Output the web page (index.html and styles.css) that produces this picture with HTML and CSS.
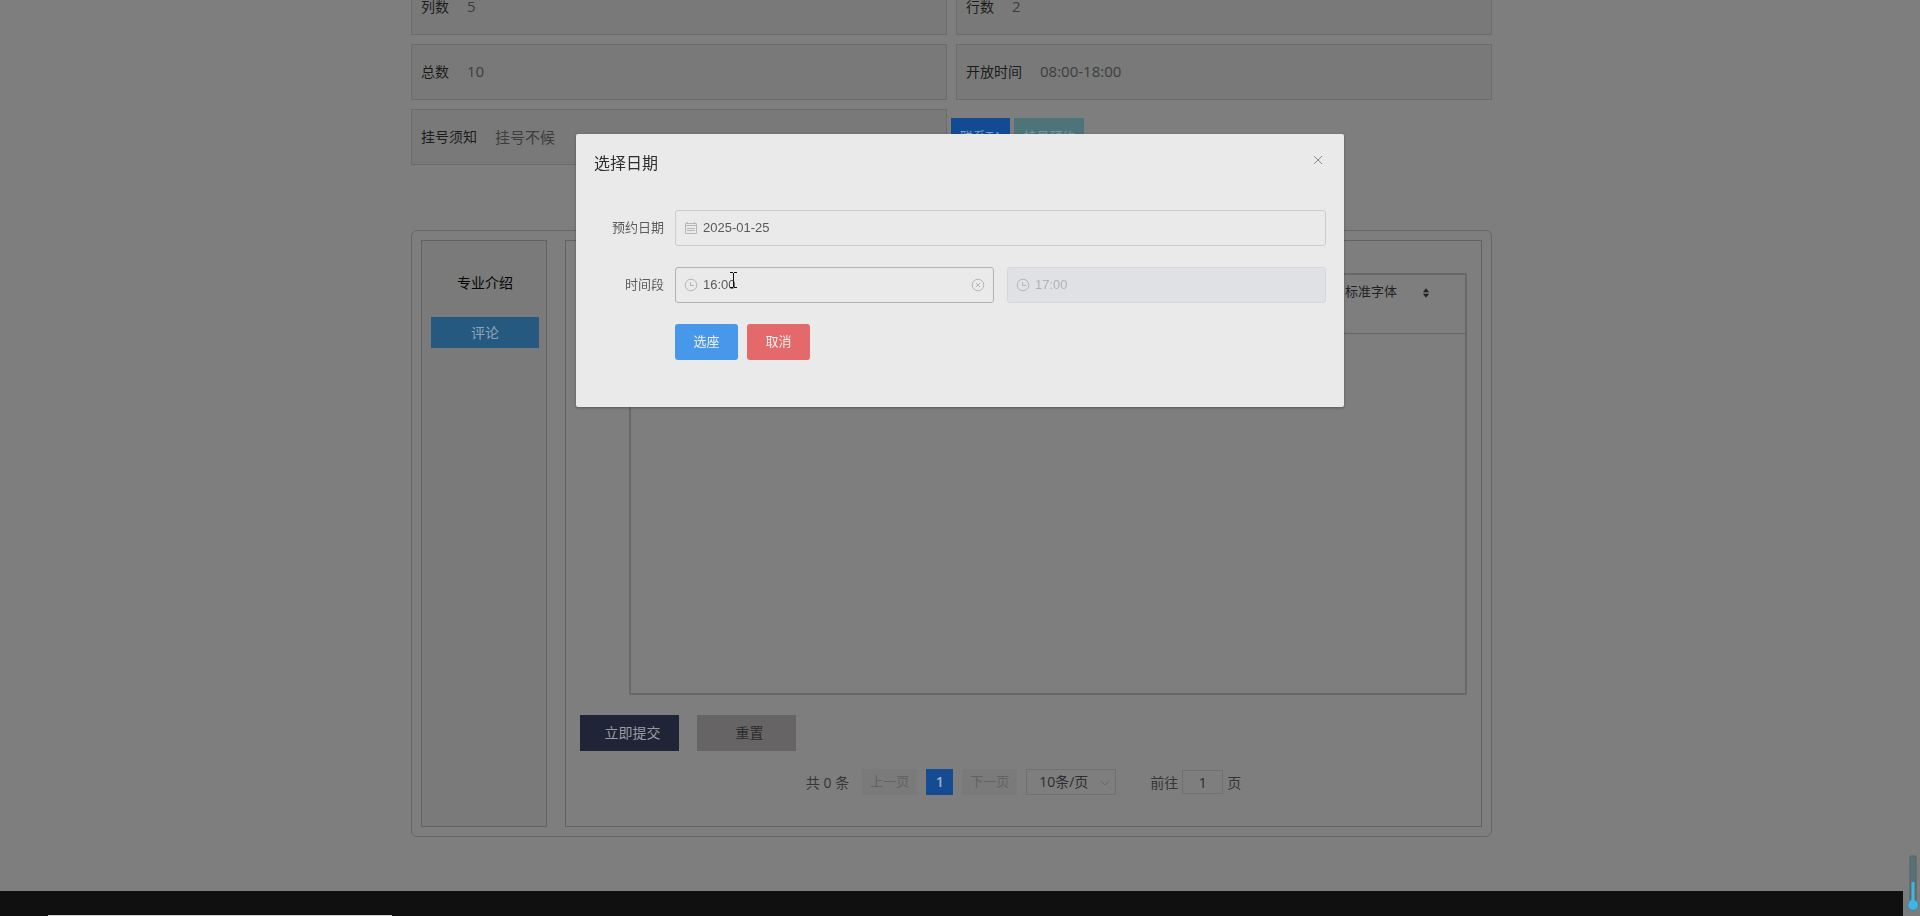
FILE: index.html
```html
<!DOCTYPE html>
<html lang="zh-CN">
<head>
    <meta charset="UTF-8">
    <meta name="viewport" content="width=device-width, initial-scale=1.0">
    <title>预约挂号</title>
    <link rel="stylesheet" href="styles.css">
</head>
<body>
    <div class="page">
        <main class="container">
            <div class="info">
                <div class="info-item"><span class="name">列数</span><span class="value">5</span></div>
                <div class="info-item"><span class="name">行数</span><span class="value">2</span></div>
                <div class="info-item"><span class="name">总数</span><span class="value">10</span></div>
                <div class="info-item"><span class="name">开放时间</span><span class="value">08:00-18:00</span></div>
                <div class="info-item"><span class="name">挂号须知</span><span class="value">挂号不候</span></div>
                <div class="info-actions">
                    <button class="btn-contact">联系TA</button>
                    <button class="btn-book">挂号预约</button>
                </div>
            </div>

            <div class="tabs">
                <nav class="tab-nav">
                    <a href="#intro">专业介绍</a>
                    <a href="#comment" class="active">评论</a>
                </nav>
                <section class="tab-content">
                    <div class="editor">
                        <div class="toolbar">
                            <button class="font-picker">
                                标准字体
                                <svg width="18" height="18" viewBox="0 0 18 18"><polygon points="5 8 9 3 13 8"/><polygon points="5 10 9 15 13 10"/></svg>
                            </button>
                        </div>
                        <div class="editor-body" contenteditable="true" aria-label="评论"></div>
                    </div>
                    <div class="form-actions">
                        <button class="btn-submit">立即提交</button>
                        <button class="btn-reset">重置</button>
                    </div>
                    <div class="pagination">
                        <span class="total">共 0 条</span>
                        <button class="page-btn" disabled>上一页</button>
                        <button class="page-num">1</button>
                        <button class="page-btn" disabled>下一页</button>
                        <div class="page-size">
                            <select aria-label="每页条数">
                                <option>10条/页</option>
                            </select>
                            <svg width="10" height="6" viewBox="0 0 10 6"><path d="M1 1l4 4 4-4"/></svg>
                        </div>
                        <label class="jump">前往<input type="text" value="1">页</label>
                    </div>
                </section>
            </div>
        </main>
        <footer class="footer"></footer>
    </div>

    <div class="overlay">
        <div class="dialog" role="dialog" aria-labelledby="dialogTitle">
            <div class="dialog-header">
                <h2 id="dialogTitle">选择日期</h2>
                <button class="close" aria-label="关闭">
                    <svg width="10" height="10" viewBox="0 0 10 10"><path d="M1 1l8 8M9 1l-8 8"/></svg>
                </button>
            </div>
            <form class="dialog-form">
                <div class="form-row">
                    <label for="date">预约日期</label>
                    <div class="field">
                        <svg class="icon" width="14" height="14" viewBox="0 0 14 14"><path d="M1.500 2.500h11v10h-11zM1.500 4.500h11M3.500 1v2M10.500 1v2M3 7.500h8M3 9.500h8"/></svg>
                        <input type="text" id="date" value="2025-01-25">
                    </div>
                </div>
                <div class="form-row">
                    <label for="start">时间段</label>
                    <div class="field hover">
                        <svg class="icon" width="14" height="14" viewBox="0 0 14 14"><circle cx="7" cy="7" r="5.800"/><path d="M6.500 4v3.500h3.500"/></svg>
                        <input type="text" id="start" value="16:00">
                        <svg class="icon" width="14" height="14" viewBox="0 0 14 14"><circle cx="7" cy="7" r="5.800"/><path d="M5 5l4 4M9 5l-4 4"/></svg>
                        <svg class="cursor" width="9" height="17" viewBox="0 0 9 17"><path d="M1 1.500h3M5 1.500h3M4.500 2v14M1 16.500h3M5 16.500h3"/></svg>
                    </div>
                    <div class="field disabled">
                        <svg class="icon" width="14" height="14" viewBox="0 0 14 14"><circle cx="7" cy="7" r="5.800"/><path d="M6.500 4v3.500h3.500"/></svg>
                        <input type="text" aria-label="结束时间" value="17:00" disabled>
                    </div>
                </div>
                <div class="dialog-actions">
                    <button type="button" class="btn-primary">选座</button>
                    <button type="button" class="btn-danger">取消</button>
                </div>
            </form>
        </div>
    </div>

    <div class="taskline"></div>
    <svg class="thermometer" width="14" height="58" viewBox="0 0 14 58">
        <rect x="4" y="1" width="6" height="46" rx="1" fill="#5a7276" stroke="#4c6266"/>
        <circle cx="7" cy="50" r="5.500" fill="#43b3e0" stroke="#3f7e96"/>
        <path d="M7 27v20" stroke="#43b3e0" stroke-width="3"/>
    </svg>
</body>
</html>
```

FILE: styles.css
```css
* {
    box-sizing: border-box;
}
body {
    margin: 0;
    background-color: #7e7e7e;
    color: #333;
    font-family: "Open Sans", "Noto Sans CJK SC", sans-serif;
    font-size: 14px;
    overflow: hidden;
}
button, input, select {
    font-family: inherit;
    font-size: 14px;
    margin: 0;
    padding: 0;
    border: 0;
    border-radius: 0;
    outline: none;
}
button {
    padding-bottom: 3px;
    cursor: pointer;
}
a {
    text-decoration: none;
}
svg {
    fill: none;
    flex: none;
}

/* page under the mask */
.page {
    height: 100vh;
    padding-right: 17px;
    overflow: hidden;
}
.container {
    width: 90%;
    max-width: 1081px;
    margin: -21px auto 0;
}
.info {
    display: grid;
    grid-template-columns: 1fr 1fr;
    gap: 9px;
}
.info-item {
    height: 56px;
    padding: 0 9px 2px;
    display: flex;
    align-items: center;
    gap: 18px;
    background-color: #797979;
    border: 1px solid #6b6b6b;
}
.info-item .name {
    color: #1c1c1c;
}
.info-item .value {
    font-size: 15px;
    color: #3d3d3d;
}
.info-actions {
    display: flex;
    gap: 4px;
    margin-left: -5px;
    padding-top: 9px;
}
.info-actions button {
    height: 40px;
    font-size: 13px;
    padding: 0 9px 6px;
}
.info-actions .btn-contact {
    background-color: #124a94;
    color: #8b9fb9;
}
.info-actions .btn-book {
    background-color: #4d7479;
    color: #76979b;
}

.tabs {
    display: flex;
    gap: 18px;
    height: 607px;
    margin-top: 65px;
    padding: 9px;
    border: 1px solid #666;
    border-radius: 6px;
}
.tab-nav {
    width: 126px;
    padding: 26px 7px 26px 9px;
    background-color: #7a7a7a;
    border: 1px solid #626262;
}
.tab-nav a {
    display: block;
    height: 31px;
    margin-bottom: 19px;
    line-height: 31px;
    text-align: center;
    color: #050505;
}
.tab-nav .active {
    background-color: #255980;
    color: #8fa4b3;
}
.tab-content {
    flex: 1;
    padding: 32px 14px 0;
    border: 1px solid #626262;
}
.editor {
    height: 422px;
    margin-left: 49px;
    display: flex;
    flex-direction: column;
    border: 2px solid #686868;
    border-radius: 2px;
}
.toolbar {
    height: 59px;
    padding: 4px 32px;
    display: flex;
    justify-content: flex-end;
    align-items: flex-start;
    border-bottom: 1px solid #656565;
}
.font-picker {
    height: 26px;
    width: 88px;
    display: flex;
    align-items: center;
    justify-content: space-between;
    background: none;
    color: #222;
    font-size: 13px;
    white-space: nowrap;
}
.font-picker svg {
    width: 14px;
    margin-top: 4px;
    fill: #222;
}
.editor-body {
    flex: 1;
    outline: none;
}
.form-actions {
    display: flex;
    gap: 18px;
    margin-top: 20px;
}
.form-actions button {
    width: 99px;
    height: 36px;
    padding-left: 6px;
}
.btn-submit {
    background-color: #1f2536;
    color: #999ca3;
}
.btn-reset {
    background-color: #666464;
    color: #2c2c2c;
}
.pagination {
    height: 26px;
    margin-top: 18px;
    display: flex;
    justify-content: center;
    align-items: center;
    gap: 9px;
    color: #353535;
}
.pagination .total {
    margin-right: 4px;
}
.page-btn {
    width: 55px;
    height: 26px;
    background-color: #7a7a7a;
    color: #626262;
    font-size: 13px;
}
.page-num {
    width: 27px;
    height: 26px;
    padding-bottom: 1px;
    background-color: #144b93;
    color: #a0b0c6;
    font-weight: 600;
}
.page-size {
    position: relative;
}
.page-size select {
    display: block;
    width: 90px;
    height: 26px;
    padding: 0 0 1px 12px;
    appearance: none;
    background: none;
    border: 1px solid #707070;
    color: #2c2c2c;
}
.page-size svg {
    position: absolute;
    right: 6px;
    top: 11px;
    stroke: #686868;
}
.jump {
    margin-left: 25px;
    display: flex;
    align-items: center;
    gap: 4px;
}
.jump input {
    width: 41px;
    height: 24px;
    background: none;
    border: 1px solid #707070;
    color: #2c2c2c;
    text-align: center;
}
.footer {
    height: 60px;
    margin: 54px -17px 0 0;
    background-color: #101010;
    border-right: 17px solid #7c7c7c;
}

/* dialog */
.overlay {
    position: fixed;
    inset: 0;
    padding-top: 134px;
}
.dialog {
    width: 40%;
    min-width: 600px;
    margin: 0 auto;
    padding: 18px;
    background-color: #eaeaea;
    border-radius: 2px;
    box-shadow: 0 1px 3px rgba(0, 0, 0, 0.3);
}
.dialog-header {
    display: flex;
    justify-content: space-between;
}
.dialog-header h2 {
    margin: 0;
    font-size: 16px;
    font-weight: normal;
    line-height: 22px;
    color: #2e2e2e;
}
.close {
    height: 16px;
    padding: 0 3px;
    background: none;
}
.close svg {
    display: block;
    stroke: #8c8c8c;
}
.dialog-form {
    padding: 36px 0 29px;
}
.form-row {
    display: flex;
    gap: 13px;
    margin-bottom: 21px;
}
.form-row label {
    width: 70px;
    margin-right: -2px;
    line-height: 34px;
    font-size: 13px;
    text-align: right;
    color: #5c5c5c;
}
.field {
    position: relative;
    flex: 1;
    min-width: 0;
    height: 36px;
    padding: 0 8px;
    display: flex;
    align-items: center;
    gap: 5px;
    border: 1px solid #cccdcf;
    border-radius: 3px;
}
.field input {
    flex: 1;
    min-width: 0;
    padding-bottom: 2px;
    background: none;
    color: #5a5a5a;
    font-family: "Liberation Sans", sans-serif;
    font-size: 13px;
}
.field .icon {
    stroke: #b4b6ba;
}
.field.hover {
    border-color: #b0b1b4;
}
.field.disabled {
    background-color: #dfe1e5;
    border-color: #d3d6dc;
}
.field.disabled input {
    color: #b0b2b6;
}
.cursor {
    position: absolute;
    left: 53px;
    top: 3px;
    stroke: #111;
}
.dialog-actions {
    display: flex;
    gap: 9px;
    padding-left: 81px;
}
.dialog-actions button {
    width: 63px;
    height: 36px;
    border-radius: 3px;
    font-size: 13px;
    color: #f0f0f0;
}
.btn-primary {
    background-color: #4797ea;
}
.btn-danger {
    background-color: #e3696b;
}

/* desktop strip and gadget */
.taskline {
    position: fixed;
    left: 48px;
    bottom: 0;
    width: 344px;
    height: 1px;
    background-color: #d0d0d0;
}
.thermometer {
    position: fixed;
    right: 0;
    bottom: 3px;
}
```
